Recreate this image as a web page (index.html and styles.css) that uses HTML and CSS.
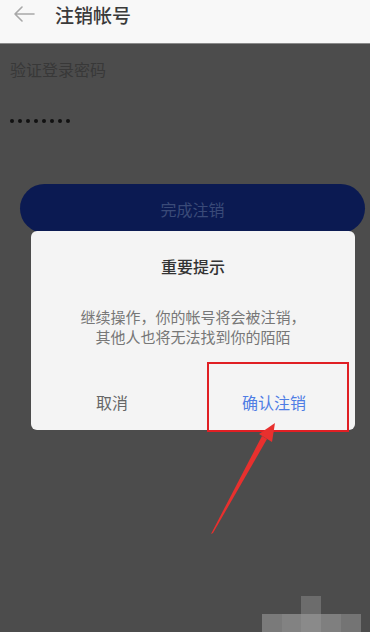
FILE: index.html
```html
<!DOCTYPE html>
<html lang="zh">
<head>
<meta charset="utf-8">
<link rel="stylesheet" href="styles.css">
</head>
<body>
<header class="topbar">
  <svg class="back" width="22" height="16" viewBox="0 0 22 16"><path d="M21 8H2M9 1L2 8l7 7" fill="none" stroke="#a8a8a8" stroke-width="1.6" stroke-linecap="round" stroke-linejoin="round"/></svg>
  <h1 class="title">注销帐号</h1>
</header>
<main class="content">
  <div class="label">验证登录密码</div>
  <div class="dots"><i></i><i></i><i></i><i></i><i></i><i></i><i></i><i></i></div>
  <div class="submit">完成注销</div>
</main>

<div class="dialog">
  <div class="d-title">重要提示</div>
  <div class="d-msg">继续操作，你的帐号将会被注销，<br>其他人也将无法找到你的陌陌</div>
  <div class="d-actions">
    <div class="d-btn cancel">取消</div>
    <div class="d-btn confirm">确认注销</div>
  </div>
</div>

<div class="highlight"></div>

<svg class="arrow" width="370" height="632" viewBox="0 0 370 632">
  <polygon points="211,534 262,436 267,439 213,533" fill="#e8302e"/>
  <polygon points="275,423 259,434 272,442" fill="#e8302e"/>
</svg>

<svg class="mosaic" width="110" height="40" viewBox="0 0 110 40">
  <rect x="39" y="0" width="20" height="18" fill="#6c6c6c"/>
  <rect x="0" y="18" width="20" height="22" fill="#7a7a7a"/>
  <rect x="20" y="18" width="19" height="22" fill="#828282"/>
  <rect x="39" y="18" width="20" height="22" fill="#8a8a8a"/>
  <rect x="59" y="18" width="20" height="22" fill="#7f7f7f"/>
  <rect x="79" y="18" width="20" height="22" fill="#747474"/>
</svg>
</body>
</html>
```

FILE: styles.css
```css
* { box-sizing: border-box; margin: 0; padding: 0; }
html, body { width: 370px; height: 632px; overflow: hidden; }
body {
  background: #4c4c4c;
  font-family: "Noto Sans CJK SC", "Noto Sans", sans-serif;
  display: flex;
  flex-direction: column;
}
.topbar {
  height: 44px;
  background: #f8f8f8;
  border-bottom: 1px solid #8a8a8a;
  display: flex;
  align-items: flex-start;
  padding-top: 3px;
  flex-shrink: 0;
}
.back { margin: 3px 0 0 13px; }
.title {
  margin-left: 20px;
  font-size: 19px;
  font-weight: 500;
  color: #3a3a3a;
  line-height: 24px;
}
.content {
  padding: 15px 5px 0 10px;
  display: flex;
  flex-direction: column;
}
.label {
  font-size: 16px;
  line-height: 20px;
  color: #383838;
}
.dots {
  display: flex;
  gap: 4px;
  margin-top: 40px;
  height: 4px;
}
.dots i {
  width: 4px;
  height: 4px;
  border-radius: 50%;
  background: #111;
}
.submit {
  margin: 61px 0 0 10px;
  height: 49px;
  border-radius: 25px;
  background: #0b1a52;
  color: #3a4a78;
  font-size: 16px;
  display: flex;
  align-items: center;
  justify-content: center;
}
.dialog {
  position: absolute;
  left: 31px;
  top: 231px;
  width: 324px;
  height: 199px;
  background: #f4f4f4;
  border-radius: 6px;
  padding-top: 25px;
  display: flex;
  flex-direction: column;
  align-items: center;
}
.d-title {
  font-size: 16px;
  line-height: 20px;
  font-weight: 500;
  color: #333;
}
.d-msg {
  margin-top: 31px;
  font-size: 15px;
  line-height: 20px;
  color: #777;
  text-align: center;
}
.d-actions {
  margin-top: auto;
  width: 100%;
  height: 56px;
  display: flex;
}
.d-btn {
  flex: 1;
  display: flex;
  align-items: center;
  justify-content: center;
  font-size: 16px;
}
.cancel { color: #666; }
.confirm { color: #4f7de4; }
.highlight {
  position: absolute;
  left: 207px;
  top: 362px;
  width: 142px;
  height: 70px;
  border: 2.5px solid #e01f24;
}
.arrow { position: absolute; left: 0; top: 0; }
.mosaic { position: absolute; left: 262px; top: 596px; }
```
